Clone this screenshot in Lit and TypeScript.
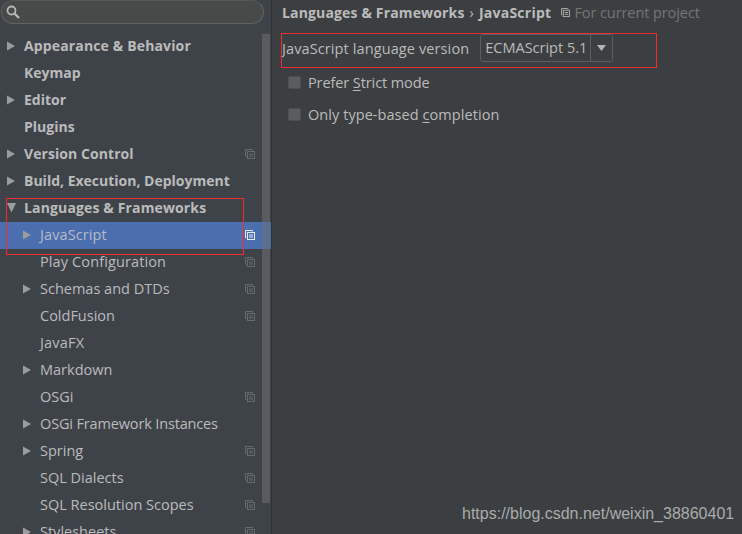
import { LitElement, html, css, svg } from "lit";
import { customElement } from "lit/decorators.js";

type Row = { label: string; level: 0 | 1; arrow?: "right" | "down"; copy?: boolean; selected?: boolean; ls?: number };

const ROWS: Row[] = [
  { label: "Appearance & Behavior", level: 0, arrow: "right", ls: 0.14 },
  { label: "Keymap", level: 0 },
  { label: "Editor", level: 0, arrow: "right" },
  { label: "Plugins", level: 0 },
  { label: "Version Control", level: 0, arrow: "right", copy: true, ls: 0.07 },
  { label: "Build, Execution, Deployment", level: 0, arrow: "right" },
  { label: "Languages & Frameworks", level: 0, arrow: "down", ls: 0.14 },
  { label: "JavaScript", level: 1, arrow: "right", copy: true, selected: true, ls: 0.1 },
  { label: "Play Configuration", level: 1, copy: true, ls: 0.12 },
  { label: "Schemas and DTDs", level: 1, arrow: "right", copy: true },
  { label: "ColdFusion", level: 1, copy: true },
  { label: "JavaFX", level: 1, ls: 0.2 },
  { label: "Markdown", level: 1, arrow: "right" },
  { label: "OSGi", level: 1, copy: true },
  { label: "OSGi Framework Instances", level: 1, arrow: "right", ls: -0.15 },
  { label: "Spring", level: 1, arrow: "right", copy: true },
  { label: "SQL Dialects", level: 1, copy: true },
  { label: "SQL Resolution Scopes", level: 1, copy: true },
  { label: "Stylesheets", level: 1, arrow: "right", copy: true },
];

const copyIcon = svg`<svg class="copy" width="10" height="10" viewBox="0 0 10 10" fill="none" stroke="currentColor" stroke-width="1"><path d="M7.5 1.5V.5H.5V7.5H1.5"/><rect x="2.5" y="2.5" width="7" height="7"/><path d="M4 5H8M4 7H8"/></svg>`;

function scopeIcon() {
  return html`<svg width="9" height="9" viewBox="0 0 10 10" fill="none" stroke="currentColor" stroke-width="1.1"><path d="M7.5 1.5V.5H.5V7.5H1.5"/><rect x="2.5" y="2.5" width="7" height="7"/><path d="M4 5H8M4 7H8"/></svg>`;
}

@customElement("app-root")
export class AppRoot extends LitElement {
  static styles = css`
    :host { display: block; width: 742px; height: 534px; overflow: hidden; position: relative; font-family: "Open Sans", "Noto Sans", sans-serif; font-size: 14.5px; color: #bbbbbb; background: #3c3f41; }
    * { box-sizing: border-box; }
    .app { display: flex; width: 742px; height: 534px; }
    .side { width: 272px; flex: none; height: 534px; background: #3e434a; border-right: 1px solid #323232; position: relative; overflow: hidden; }
    .searchwrap { height: 33px; padding: 0 8px 0 1px; }
    .search { height: 24px; width: 263px; border: 1px solid #5f6361; border-top-color: #55585a; border-radius: 12px; background: #464a49; display: flex; align-items: center; padding-left: 4px; }
    .row { height: 27px; display: flex; align-items: center; position: relative; white-space: nowrap; }
    .row.sel { background: #4b6eaf; }
    .row.bold { font-weight: 700; font-size: 14px; }
    .label { position: relative; top: -1px; }
    .arrow { width: 9px; height: 10px; position: absolute; top: 8px; color: #9a9c9d; }
    .l0 .arrow { left: 7px; }
    .l1 .arrow { left: 23px; }
    .l0 .label { margin-left: 24px; }
    .l1 .label { margin-left: 40px; }
    .sel .label { color: #b6bcc6; }
    .copy { position: absolute; left: 245px; top: 8px; color: #686b6e; }
    .sel .copy { color: #e6ebf3; }
    .bar { position: absolute; left: 262px; top: 34px; width: 8px; height: 469px; background: rgba(110,113,117,0.55); }
    .main { flex: 1; display: flex; flex-direction: column; padding-left: 10px; min-width: 0; }
    .crumb { height: 25px; display: flex; align-items: center; white-space: nowrap; font-weight: 700; font-size: 14px; letter-spacing: 0.15px; }
    .crumb .sep { font-weight: 400; margin: 0 5px; }
    .crumb .cur { letter-spacing: 0.25px; }
    .scope { display: flex; align-items: center; font-weight: 400; font-size: 14.5px; letter-spacing: -0.08px; color: #73767a; margin-left: 10px; }
    .scope svg { margin-right: 4px; color: #a8a8a8; }
    .lang { height: 34px; margin-top: 6px; display: flex; align-items: center; white-space: nowrap; }
    .lang .name { letter-spacing: 0.11px; }
    .combo { margin-left: 11px; width: 133px; height: 28px; border: 1px solid #5b5e60; border-radius: 3px; display: flex; align-items: center; }
    .combo .val { width: 110px; padding-left: 4px; border-right: 1px solid #5b5e60; height: 26px; line-height: 26px; }
    .combo .drop { flex: 1; display: flex; justify-content: center; align-items: center; color: #b5b5b5; }
    .check { display: flex; align-items: center; height: 32px; padding-left: 6px; white-space: nowrap; }
    .check.first { margin-top: 1px; letter-spacing: -0.1px; }
    .check.second { letter-spacing: 0.06px; }
    .box { width: 13px; height: 13px; border-radius: 2px; background: #5a5d5f; border: 1px solid #4e5052; margin-right: 7px; flex: none; }
    u { text-underline-offset: 2px; text-decoration-thickness: 1px; }
    .red { position: absolute; border: 1px solid #f02c2c; pointer-events: none; }
    .red.a { left: 6px; top: 198px; width: 238px; height: 57px; }
    .red.b { left: 281px; top: 33px; width: 376px; height: 35px; }
    .mark { position: absolute; left: 462px; top: 505px; font-family: "Liberation Sans", Arial, sans-serif; font-size: 16px; color: #a9abac; white-space: nowrap; }
  `;

  private arrow(kind?: "right" | "down") {
    if (!kind) return null;
    return html`<svg class="arrow" viewBox="0 0 9 10" fill="currentColor">
      ${kind === "right" ? svg`<path d="M0 0.5L8 5L0 9.5Z"/>` : svg`<path d="M0 0H9L4.5 9.5Z"/>`}
    </svg>`;
  }

  render() {
    return html`
      <div class="app">
        <aside class="side">
          <div class="searchwrap">
            <div class="search">
              <svg width="14" height="14" viewBox="0 0 14 14" fill="none" stroke="#b5b7b8" stroke-width="1.8"><circle cx="5.5" cy="5.5" r="4"/><path d="M8.5 8.5L13 13" stroke-width="2.4"/></svg>
            </div>
          </div>
          ${ROWS.map(
            (r) => html`<div class="row l${r.level} ${r.level === 0 ? "bold" : ""} ${r.selected ? "sel" : ""}">
              ${this.arrow(r.arrow)}
              <span class="label" style=${r.ls ? `letter-spacing:${r.ls}px` : ""}>${r.label}</span>
              ${r.copy ? copyIcon : null}
            </div>`
          )}
          <div class="bar"></div>
        </aside>
        <main class="main">
          <div class="crumb">
            <span>Languages &amp; Frameworks</span><span class="sep">›</span><span class="cur">JavaScript</span>
            <span class="scope">${scopeIcon()}For current project</span>
          </div>
          <div class="lang">
            <span class="name">JavaScript language version</span>
            <div class="combo">
              <div class="val">ECMAScript 5.1</div>
              <div class="drop"><svg width="9" height="6" viewBox="0 0 9 6" fill="currentColor"><path d="M0 0H9L4.5 6Z"/></svg></div>
            </div>
          </div>
          <div class="check first"><span class="box"></span><span>Prefer <u>S</u>trict mode</span></div>
          <div class="check second"><span class="box"></span><span>Only type-based <u>c</u>ompletion</span></div>
        </main>
      </div>
      <div class="red a"></div>
      <div class="red b"></div>
      <div class="mark">https://blog.csdn.net/weixin_38860401</div>
    `;
  }
}
